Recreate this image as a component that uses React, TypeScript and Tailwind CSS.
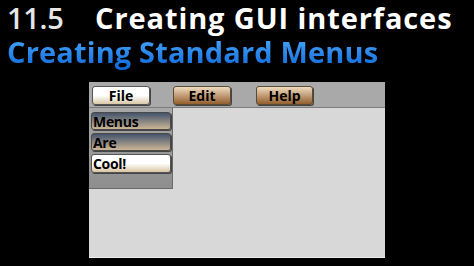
import React from "react";

const font = { fontFamily: '"Open Sans", "Noto Sans", sans-serif' };

export default function App() {
  return (
    <div
      className="w-[474px] h-[266px] bg-black overflow-hidden flex flex-col"
      style={font}
    >
      <div className="flex items-baseline h-[34px] pl-[7px] pt-[1px]">
        <span className="text-[29px] leading-[33px] font-semibold text-[#e6e6e6] w-[88px] tracking-[-0.3px]">
          11.5
        </span>
        <span className="text-[29px] leading-[33px] font-bold text-white tracking-[0.9px]">
          Creating GUI interfaces
        </span>
      </div>
      <div className="h-[44px] pl-[7px] pt-[1px]">
        <span className="text-[29px] leading-[34px] font-bold tracking-[0.15px] bg-gradient-to-b from-[#4fb0ff] to-[#0a64d8] bg-clip-text text-transparent">
          Creating Standard Menus
        </span>
      </div>
      <div className="ml-[89px] mt-[4px] w-[296px] h-[176px] bg-[#d8d8d8] flex flex-col border-b border-[#efefef]">
        <div className="h-[26px] bg-[#a9a9a9] border-b border-[#7c7c7c] flex items-start pt-[4px] pl-[3px]">
          <div className="w-[58px] h-[19px] rounded-[3px] bg-gradient-to-b from-white via-white to-[#d9c7a6] border border-[#555] shadow-[1px_1px_0_#444] flex items-center justify-center text-[14px] font-bold text-black">
            File
          </div>
          <div className="ml-[23px] w-[58px] h-[19px] rounded-[3px] bg-gradient-to-b from-[#f0dcc0] to-[#93602e] border border-[#5a4a38] shadow-[1px_1px_0_#444] flex items-center justify-center text-[14px] font-bold text-black">
            Edit
          </div>
          <div className="ml-[25px] w-[57px] h-[19px] rounded-[3px] bg-gradient-to-b from-[#f0dcc0] to-[#93602e] border border-[#5a4a38] shadow-[1px_1px_0_#444] flex items-center justify-center text-[14px] font-bold text-black">
            Help
          </div>
        </div>
        <div className="w-[84px] h-[81px] bg-gradient-to-b from-[#a8a8a8] to-[#8e8e8e] border-r border-b border-[#6a6a6a] flex flex-col gap-[3px] pt-[4px] pl-[2px]">
          <div className="w-[80px] h-[18px] rounded-[3px] bg-gradient-to-b from-[#44546b] to-[#cdb593] border border-[#4a4a4a] shadow-[1px_1px_0_#444] flex items-center pl-[1px] text-[14px] tracking-[-0.3px] font-bold text-black">
            Menus
          </div>
          <div className="w-[80px] h-[18px] rounded-[3px] bg-gradient-to-b from-[#44546b] to-[#cdb593] border border-[#4a4a4a] shadow-[1px_1px_0_#444] flex items-center pl-[1px] text-[14px] tracking-[-0.3px] font-bold text-black">
            Are
          </div>
          <div className="w-[80px] h-[19px] rounded-[3px] bg-gradient-to-b from-white via-white to-[#d9c4a0] border border-[#555] shadow-[1px_1px_0_#444] flex items-center pl-[1px] text-[14px] tracking-[-0.3px] font-bold text-black">
            Cool!
          </div>
        </div>
      </div>
    </div>
  );
}
